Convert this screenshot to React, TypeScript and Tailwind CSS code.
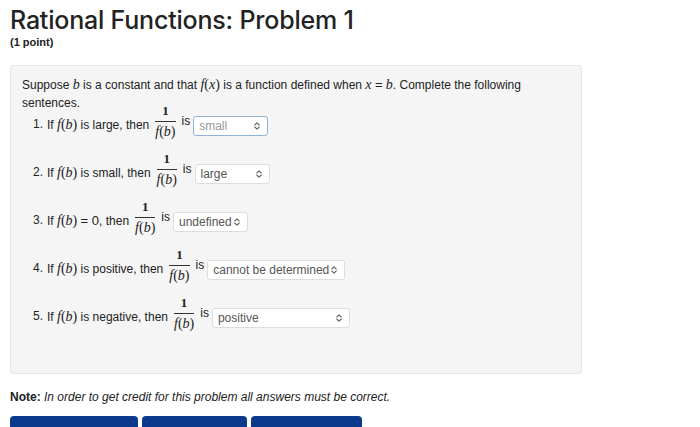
import React from "react";

const sans = { fontFamily: '"Liberation Sans", Arial, sans-serif' };

function M({ children }: { children: React.ReactNode }) {
  return (
    <span className="text-[14px] italic" style={{ fontFamily: '"Liberation Serif", "DejaVu Serif", serif' }}>
      {children}
    </span>
  );
}

function Fb() {
  return (
    <M>
      f<span className="not-italic">(</span>b<span className="not-italic">)</span>
    </M>
  );
}

function Frac() {
  return (
    <span className="mx-[6px] -mt-[6px] inline-flex flex-col items-center leading-none" style={{ fontFamily: '"Liberation Serif", serif' }}>
      <span className="px-[3px] pb-[4px] text-[13px] font-bold">1</span>
      <span className="h-px w-full bg-[#333]" />
      <span className="pt-[3px]"><Fb /></span>
    </span>
  );
}

function Chevron() {
  return (
    <svg width="8" height="10" viewBox="0 0 8 10" fill="none" stroke="#666" strokeWidth="1.1" strokeLinecap="round" strokeLinejoin="round">
      <path d="M1.8 4 L4 1.8 L6.2 4" />
      <path d="M1.8 6 L4 8.2 L6.2 6" />
    </svg>
  );
}

function Select({ value, w, focus }: { value: string; w: string; focus?: boolean }) {
  return (
    <span
      className={`ml-[3px] mt-[4px] inline-flex h-[20px] items-center justify-between rounded-[3px] border bg-white pl-[5px] pr-[6px] text-[12px] ${w} ${
        focus ? "border-[#8fb3d9] text-[#999]" : "border-[#ddd] text-[#555]"
      }`}
    >
      <span>{value}</span>
      <Chevron />
    </span>
  );
}

const items = [
  { n: "1.", pre: <>If <Fb /> is large, then</>, value: "small", w: "w-[75px]", focus: true },
  { n: "2.", pre: <>If <Fb /> is small, then</>, value: "large", w: "w-[75px]" },
  { n: "3.", pre: <>If <Fb /> <span className="text-[13px]">= 0</span>, then</>, value: "undefined", w: "w-[75px]" },
  { n: "4.", pre: <>If <Fb /> is positive, then</>, value: "cannot be determined", w: "w-[138px]" },
  { n: "5.", pre: <>If <Fb /> is negative, then</>, value: "positive", w: "w-[138px]" },
];

export default function App() {
  return (
    <div className="h-[427px] w-[700px] overflow-hidden bg-white text-[#222]" style={sans}>
      <div className="px-[10px] pt-[5px]">
        <h1
          className="text-[25px] font-medium leading-[30px] tracking-[-0.2px] text-[#222]"
          style={{ fontFamily: 'Inter, "Liberation Sans", sans-serif' }}
        >
          Rational Functions: Problem 1
        </h1>
        <p className="text-[11px] font-bold leading-[14px]">(1 point)</p>

        <div className="mt-[16px] h-[309px] w-[572px] rounded-[3px] border border-[#e6e6e6] bg-[#f5f5f5] pl-[11px] pt-[10px] text-[12px]">
          <p className="leading-[18px]">
            Suppose <M>b</M> is a constant and that <M>f<span className="not-italic">(</span>x<span className="not-italic">)</span></M> is a function defined when <M>x</M> <span className="text-[13px]">=</span> <M>b</M>. Complete the following
            <br />
            sentences.
          </p>
          <ol className="-mt-[12px] pl-[11px]">
            {items.map((it) => (
              <li key={it.n} className="flex h-[48px] items-center">
                <span className="w-[14px]">{it.n}</span>
                <span>{it.pre}</span>
                <Frac />
                <span className="-mt-[6px]">is</span>
                <Select value={it.value} w={it.w} focus={it.focus} />
              </li>
            ))}
          </ol>
        </div>

        <p className="mt-[14px] text-[12px]">
          <b>Note:</b> <i>In order to get credit for this problem all answers must be correct.</i>
        </p>

        <div className="mt-[10px] flex gap-[4px]">
          <div className="h-[20px] w-[128px] rounded-t-[4px] bg-[#0b3a8c]" />
          <div className="h-[20px] w-[105px] rounded-t-[4px] bg-[#0b3a8c]" />
          <div className="h-[20px] w-[111px] rounded-t-[4px] bg-[#0b3a8c]" />
        </div>
      </div>
    </div>
  );
}
